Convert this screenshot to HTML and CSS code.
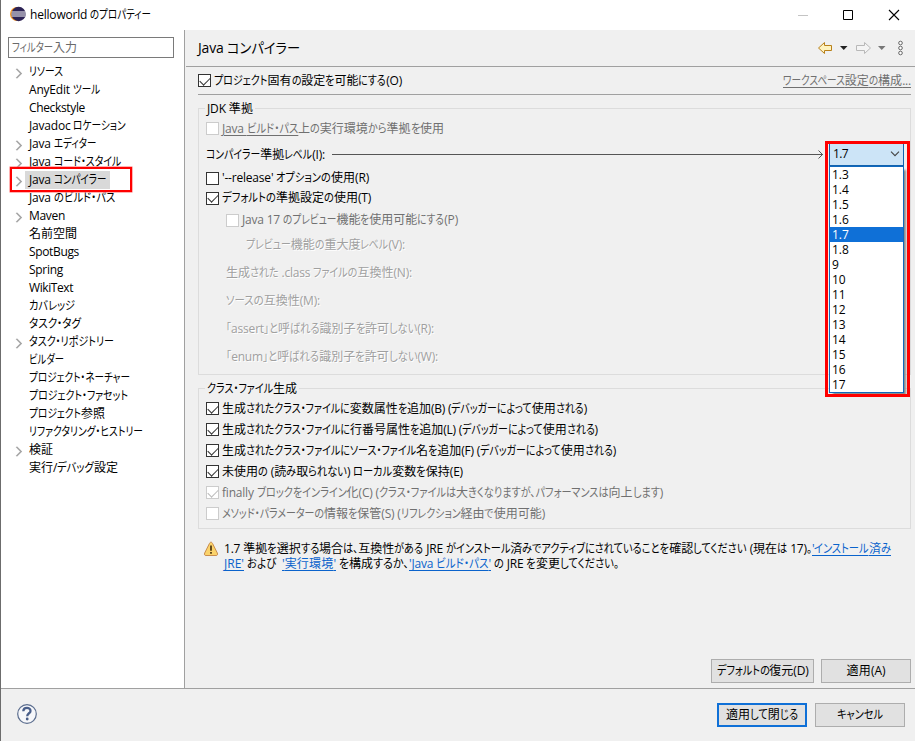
FILE: index.html
```html
<!DOCTYPE html>
<html lang="ja">
<head>
<meta charset="utf-8">
<title>helloworld のプロパティー</title>
<link rel="stylesheet" href="styles.css">
</head>
<body>
<div class="window">
  <header class="titlebar">
    <svg class="logo" width="16" height="16" viewBox="0 0 16 16"><circle cx="7" cy="8" r="7" fill="#f7941e"/><circle cx="8.6" cy="8" r="7.2" fill="#2c2255"/><path d="M1.6 6h13.8M1.3 8h14.4M1.6 10h13.8" stroke="#fff" stroke-width="1"/></svg>
    <span class="t" data-w="121">helloworld のプロパティー</span>
    <svg class="wincontrols" width="110" height="14" viewBox="0 0 110 14"><path d="M0 7.5h10" stroke="#c4c4c4"/><path d="M45.500 2.500h9v9h-9z" fill="none" stroke="#000"/><path d="M91 2l10 10M101 2l-10 10" stroke="#000" stroke-width="1.1"/></svg>
  </header>
  <div class="main">
    <nav class="side">
      <div class="filter"><span class="t" data-w="65">フィルター入力</span></div>
      <ul class="tree">
        <li class="sub"><span class="t" data-w="34">リソース</span></li>
        <li><span class="t" data-w="71">AnyEdit ツール</span></li>
        <li><span class="t" data-w="56">Checkstyle</span></li>
        <li><span class="t" data-w="97">Javadoc ロケーション</span></li>
        <li class="sub"><span class="t" data-w="67">Java エディター</span></li>
        <li class="sub"><span class="t" data-w="92">Java コード・スタイル</span></li>
        <li class="sub selected"><span class="t" data-w="77">Java コンパイラー</span><i class="mark"></i></li>
        <li><span class="t" data-w="86">Java のビルド・パス</span></li>
        <li class="sub"><span class="t" data-w="36">Maven</span></li>
        <li><span class="t" data-w="48">名前空間</span></li>
        <li><span class="t" data-w="50">SpotBugs</span></li>
        <li><span class="t" data-w="34">Spring</span></li>
        <li><span class="t" data-w="44">WikiText</span></li>
        <li><span class="t" data-w="46">カバレッジ</span></li>
        <li><span class="t" data-w="52">タスク・タグ</span></li>
        <li class="sub"><span class="t" data-w="85">タスク・リポジトリー</span></li>
        <li><span class="t" data-w="35">ビルダー</span></li>
        <li><span class="t" data-w="101">プロジェクト・ネーチャー</span></li>
        <li><span class="t" data-w="99">プロジェクト・ファセット</span></li>
        <li><span class="t" data-w="76">プロジェクト参照</span></li>
        <li><span class="t" data-w="114">リファクタリング・ヒストリー</span></li>
        <li class="sub"><span class="t" data-w="24">検証</span></li>
        <li><span class="t" data-w="89">実行/デバッグ設定</span></li>
      </ul>
    </nav>
    <section class="page">
      <div class="pagehead">
        <span class="t heading" data-w="102">Java コンパイラー</span>
        <svg width="90" height="18" viewBox="0 0 90 18"><path d="M1.500 9L7.500 3.500V6.500H14.500V11.500H7.500V14.500Z" fill="#fff3bd" stroke="#b8801a" stroke-linejoin="round"/><path d="M23 7h7.500l-3.750 4z" fill="#222"/><path d="M53.500 9L47.500 3.500V6.500H39.500V11.500H47.500V14.500Z" fill="#f4f4f4" stroke="#b8b8b8" stroke-linejoin="round"/><path d="M61 7h7.500l-3.750 4z" fill="#777"/><g fill="#fff" stroke="#666"><circle cx="83.500" cy="4" r="1.800"/><circle cx="83.500" cy="9" r="1.800"/><circle cx="83.500" cy="14" r="1.800"/></g></svg>
      </div>
      <div class="project">
        <i class="cb on"></i><span class="t" data-w="188">プロジェクト固有の設定を可能にする(O)</span>
        <a class="t dim push" data-w="128">ワークスペース設定の構成...</a>
      </div>
      <fieldset class="jdk">
        <legend><span class="t" data-w="46">JDK 準拠</span></legend>
        <div class="row r1 dim"><i class="cb off"></i><a class="t" data-w="76">Java ビルド・パス</a><span class="t" data-w="146">上の実行環境から準拠を使用</span></div>
        <div class="row r2"><span class="t" data-w="119">コンパイラー準拠レベル(I):</span><i class="arrow"><svg width="5" height="9" viewBox="0 0 5 9"><path d="M.5 .5l4 4-4 4" fill="none" stroke="#555"/></svg></i>
          <div class="combo"><span class="t" data-w="15">1.7</span><svg width="10" height="6" viewBox="0 0 10 6"><path d="M1 .7l4 4 4-4" fill="none" stroke="#444" stroke-width="1.100"/></svg>
            <ul class="list"><li>1.3</li><li>1.4</li><li>1.5</li><li>1.6</li><li class="cur">1.7</li><li>1.8</li><li>9</li><li>10</li><li>11</li><li>12</li><li>13</li><li>14</li><li>15</li><li>16</li><li>17</li></ul>
            <i class="mark"></i>
          </div>
        </div>
        <div class="row r3"><i class="cb"></i><span class="t" data-w="147">'--release' オプションの使用(R)</span></div>
        <div class="row"><i class="cb on"></i><span class="t" data-w="149">デフォルトの準拠設定の使用(T)</span></div>
        <div class="row in dim"><i class="cb off"></i><span class="t" data-w="216">Java 17 のプレビュー機能を使用可能にする(P)</span></div>
        <div class="row label deep"><span class="t" data-w="159">プレビュー機能の重大度レベル(V):</span></div>
        <div class="row label"><span class="t" data-w="186">生成された .class ファイルの互換性(N):</span></div>
        <div class="row label"><span class="t" data-w="94">ソースの互換性(M):</span></div>
        <div class="row label"><span class="t" data-w="208">「assert」と呼ばれる識別子を許可しない(R):</span></div>
        <div class="row label"><span class="t" data-w="212">「enum」と呼ばれる識別子を許可しない(W):</span></div>
      </fieldset>
      <fieldset class="classfile">
        <legend><span class="t" data-w="90">クラス・ファイル生成</span></legend>
        <div class="row"><i class="cb on"></i><span class="t" data-w="365">生成されたクラス・ファイルに変数属性を追加(B) (デバッガーによって使用される)</span></div>
        <div class="row"><i class="cb on"></i><span class="t" data-w="376">生成されたクラス・ファイルに行番号属性を追加(L) (デバッガーによって使用される)</span></div>
        <div class="row"><i class="cb on"></i><span class="t" data-w="394">生成されたクラス・ファイルにソース・ファイル名を追加(F) (デバッガーによって使用される)</span></div>
        <div class="row"><i class="cb on"></i><span class="t" data-w="241">未使用の (読み取られない) ローカル変数を保持(E)</span></div>
        <div class="row dim"><i class="cb on off"></i><span class="t" data-w="441">finally ブロックをインライン化(C) (クラス・ファイルは大きくなりますが、パフォーマンスは向上します)</span></div>
        <div class="row dim"><i class="cb off"></i><span class="t" data-w="323">メソッド・パラメーターの情報を保管(S) (リフレクション経由で使用可能)</span></div>
      </fieldset>
      <div class="notice">
        <svg width="16" height="16" viewBox="0 0 16 16"><path d="M8 1.200C8.900 1.200 9.300 2 9.700 2.800L14.300 12C15 13.600 14.400 14.500 13 14.500H3C1.600 14.500 1 13.600 1.700 12L6.300 2.800C6.700 2 7.100 1.200 8 1.200Z" fill="#fbd36b" stroke="#c98d4e"/><path d="M8 4.500v5.200M8 11v1.800" stroke="#4a3410" stroke-width="1.700"/></svg>
        <div>
          <p><span class="t" data-w="588">1.7 準拠を選択する場合は、互換性がある JRE がインストール済みでアクティブにされていることを確認してください (現在は 17)。</span><a class="t" data-w="79">'インストール済み</a></p>
          <p><a class="t" data-w="20">JRE'</a><span class="t" data-w="38"> および  </span><a class="t" data-w="54">'実行環境'</a><span class="t" data-w="73"> を構成するか、</span><a class="t" data-w="82">'Java ビルド・パス'</a><span class="t" data-w="128"> の JRE を変更してください。</span></p>
        </div>
      </div>
      <div class="actions"><button class="wide"><span class="t" data-w="92">デフォルトの復元(D)</span></button><button><span class="t" data-w="39">適用(A)</span></button></div>
    </section>
  </div>
  <footer class="footer">
    <svg width="20" height="20" viewBox="0 0 20 20"><circle cx="10" cy="10" r="9.300" fill="#f6f7fa" stroke="#5b6d8e" stroke-width="1.200"/><path d="M6.300 7.200C6.500 2.900 13.500 3 13.500 6.900C13.500 9.300 10.200 9.300 10.200 12.300" fill="none" stroke="#4a5f8a" stroke-width="2.300"/><circle cx="10.200" cy="15" r="1.400" fill="#4a5f8a"/></svg>
    <div class="finish"><button class="primary"><span class="t" data-w="72">適用して閉じる</span></button><button><span class="t" data-w="46">キャンセル</span></button></div>
  </footer>
</div>
<script src="fit.js"></script>
</body>
</html>
```
FILE: styles.css
```css
* { box-sizing: border-box; }
body { margin: 0; font: 12px/18px "Open Sans", "Noto Sans CJK JP", sans-serif; color: #000; }
ul, p { margin: 0; padding: 0; list-style: none; }
svg { display: block; flex: none; }
.window { width: 915px; height: 741px; background: #f0f0f0; border-left: 1px solid #6c6c6c; display: flex; flex-direction: column; overflow: hidden; }
.t { display: inline-block; white-space: pre; flex: none; }
.t .k { display: inline-block; font-feature-settings: "palt"; transform-origin: 0 50%; }
.t .l { letter-spacing: -.2px; }
a.t { color: #0a63cc; text-decoration: underline; text-underline-offset: 2px; }
a.t .k { text-decoration: underline; text-underline-offset: 2px; }

.titlebar { height: 30px; flex: none; background: #fff; display: flex; align-items: center; padding-left: 9px; }
.titlebar .logo { margin: -2px 4px 0 0; }
.wincontrols { margin-left: auto; margin-right: 7px; }
.main { height: 659px; flex: none; display: flex; border-bottom: 1px solid #a0a0a0; }
.side { width: 184px; flex: none; background: #fff; border-right: 1px solid #a0a0a0; padding: 7px 0 0 7px; }
.filter { width: 166px; height: 21px; border: 1px solid #7a7a7a; padding: 1px 3px; color: #6a6a6a; line-height: 18px; }
.tree { margin-top: 5px; }
.tree li { height: 18px; padding-left: 21px; position: relative; line-height: 18px; }
.tree .sub::before { content: ""; position: absolute; left: 5px; top: 7px; width: 6px; height: 6px; border: solid #a6a6a6; border-width: 1.5px 1.5px 0 0; box-shadow: .5px -.5px 0 #a6a6a6; transform: rotate(45deg); }
.tree .selected { background: linear-gradient(#d9d9d9, #d9d9d9) 17px 0 / 85px 18px no-repeat; z-index: 1; }
.mark { position: absolute; border: 2px solid #f00; }
.tree .mark { left: 2px; top: -4px; width: 122px; height: 25px; border-width: 2.5px; box-shadow: 0 0 0 .5px #f66; }

.page { flex: 1; display: flex; flex-direction: column; padding-left: 13px; }
.pagehead { height: 37px; flex: none; display: flex; align-items: center; justify-content: space-between; border-bottom: 1px solid #a0a0a0; margin-left: -12px; padding: 0 8px 0 12px; }
.heading { font-size: 14px; }
.project { height: 28px; flex: none; display: flex; align-items: center; border-bottom: 1px solid #a0a0a0; margin-right: 4px; }
.push { margin-left: auto; }
.dim, a.dim, .dim a { color: #707070; }
.cb { width: 13px; height: 13px; flex: none; border: 1px solid #333; background: #fff; margin-right: 3px; display: grid; place-items: center; }
.cb.on::after { content: ""; width: 9px; height: 5px; border: solid #333; border-width: 0 0 1.5px 1.5px; transform: translateY(-1px) rotate(-45deg); }
.cb.off { border-color: #ccc; }
.cb.on.off::after { border-color: #bbb; }
fieldset { margin: 0 4px 0 0; padding: 0 0 0 7px; border: 1px solid #dcdcdc; flex: none; min-width: 0; }
legend { height: 18px; line-height: 18px; margin-left: -1px; padding: 0 2px; }
legend .t { line-height: 20px; }
.jdk { height: 276px; margin-top: 4px; }
.classfile { height: 150px; margin-top: 4px; }
.classfile legend + .row { margin-top: 1px; }
.row { height: 21px; display: flex; align-items: center; }
.r1 { height: 23px; }
.r2 { height: 29px; }
.r3 { height: 18px; }
.r3 + .row { height: 22px; }
.in { margin-left: 20px; height: 22px; }
.label { margin-left: 20px; height: 28px; color: #a0a0a0; text-shadow: 1px 1px #fff; }
.deep { margin-left: 40px; }
.arrow { flex: 1; height: 1px; background: #555; margin: 0 6px 0 7px; display: flex; align-items: center; justify-content: flex-end; }
.combo { position: relative; width: 75px; height: 23px; flex: none; margin: 0 6px 1px 0; border: 1px solid #1162ae; background: #cce4f7; display: flex; align-items: center; justify-content: space-between; padding: 0 3px; }
.list { position: absolute; z-index: 2; left: -1px; top: 22px; width: 75px; height: 227px; border: 1px solid #0f68bd; background: #fff; box-shadow: 3px 3px 2px -1px #888; }
.list li { height: 15px; line-height: 15px; padding-left: 2px; }
.list .cur { background: #0f70d7; color: #fff; }
.combo .mark { z-index: 3; left: -5px; top: -3px; width: 85px; height: 256px; border-width: 3px; }
.notice { display: flex; margin: 12px 0 0 6px; }
.notice p { height: 15px; line-height: 15px; display: flex; }
.notice svg { margin-right: 5px; margin-left: -1px; }
.actions, .finish { display: flex; }
.actions { margin: auto 4px 5px auto; gap: 7px; }
.finish { margin-left: auto; gap: 8px; }
button { width: 90px; height: 24px; padding: 0; border: 1px solid #adadad; background: #e1e1e1; font: inherit; line-height: 18px; color: #000; }
.wide { width: 103px; }
.primary { border: 2px solid #0f70d7; }
.footer { flex: 1; display: flex; align-items: center; padding: 0 10px 0 16px; }
.footer > svg { margin-top: -2px; }
```
FILE: fit.js
```js
// Sets kana in a condensed width so that each label fills its data-w measure.
document.querySelectorAll('.t[data-w]').forEach(function (el) {
  var target = +el.dataset.w;
  var runs = el.textContent.match(/[\u3001-\u30ff]+|[\u0020-\u007e]+|[^\u0020-\u007e\u3001-\u30ff]+/g);
  el.textContent = '';
  var kana = [];
  runs.forEach(function (text) {
    var span = document.createElement('span');
    span.textContent = text;
    if (/^[\u3001-\u30ff]/.test(text)) { span.className = 'k'; kana.push(span); }
    else if (/^[\u0020-\u007e]/.test(text)) span.className = 'l';
    el.appendChild(span);
  });
  var total = el.getBoundingClientRect().width;
  var widths = kana.map(function (s) { return s.getBoundingClientRect().width; });
  var sum = widths.reduce(function (a, b) { return a + b; }, 0);
  if (sum) {
    var scale = (target - (total - sum)) / sum;
    kana.forEach(function (s, i) {
      s.style.width = widths[i] * scale + 'px';
      s.style.transform = 'scaleX(' + scale + ')';
    });
  } else {
    var gap = (target - total) / el.textContent.length;
    Array.from(el.children).forEach(function (s) {
      s.style.letterSpacing = (s.className === 'l' ? -0.2 : 0) + gap + 'px';
    });
  }
  el.style.width = target + 'px';
});
```
